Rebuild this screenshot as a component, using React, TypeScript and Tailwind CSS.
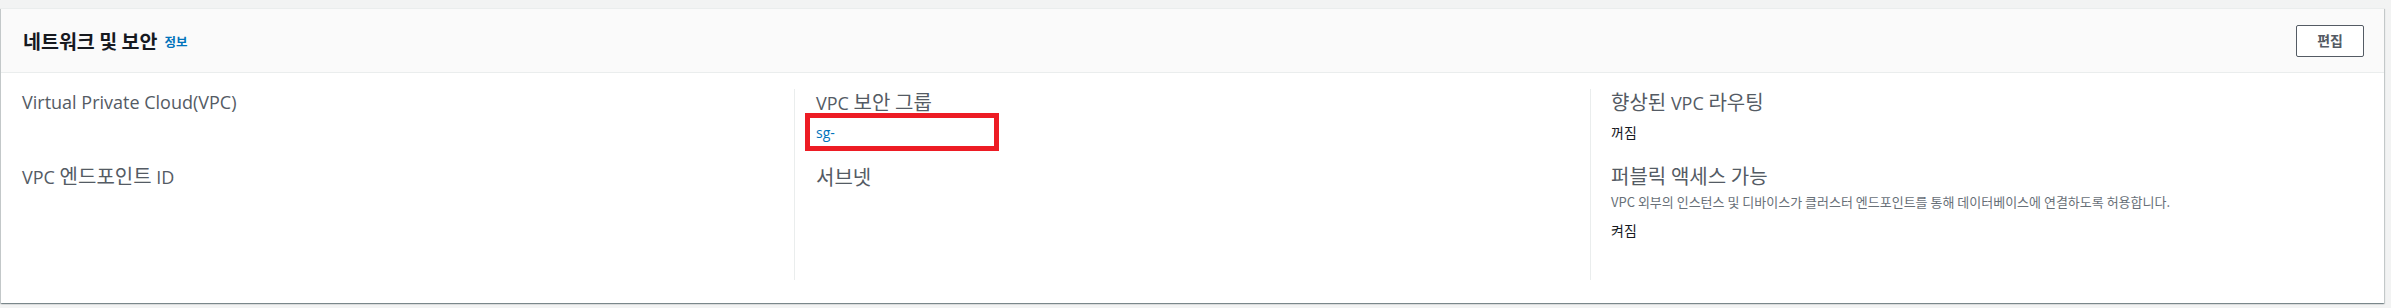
const label =
  "text-[18px] leading-[26px] text-[#545b64] font-['Open_Sans','Noto_Sans_CJK_KR',sans-serif]";
const value = "text-[14px] leading-[22px] text-[#16191f] font-['Noto_Sans_CJK_KR','Open_Sans',sans-serif]";

// Korean runs render a bit larger than the Latin ones in the labels
function Mixed({ text }: { text: string }) {
  return (
    <>
      {text.split(/([\uAC00-\uD7A3]+)/).map((part, i) =>
        /[\uAC00-\uD7A3]/.test(part) ? (
          <span key={i} className="text-[20px] leading-[26px] font-['Noto_Sans_CJK_KR',sans-serif]">
            {part}
          </span>
        ) : (
          <span key={i}>{part}</span>
        )
      )}
    </>
  );
}

function Item({
  title,
  desc,
  children,
}: {
  title: string;
  desc?: string;
  children?: React.ReactNode;
}) {
  return (
    <div className="mb-[20px]">
      <div className={`${label} h-[26px]`}>
        <Mixed text={title} />
      </div>
      {desc && (
        <div className="mt-[4px] text-[13px] leading-[18px] text-[#687078] font-['Noto_Sans_CJK_KR','Open_Sans',sans-serif]">
          {desc}
        </div>
      )}
      <div className={`${desc ? "mt-[8px]" : "mt-[6px]"} min-h-[22px] ${value}`}>{children}</div>
    </div>
  );
}

export default function App() {
  return (
    <div className="w-[2391px] h-[308px] bg-[#f2f3f3] pl-[1px] pr-[7px] pt-[8px]">
      <div className="bg-white border-t border-[#eaeded] shadow-[0_1px_1px_0_rgba(0,28,36,0.3),1px_1px_1px_0_rgba(0,28,36,0.15),-1px_1px_1px_0_rgba(0,28,36,0.15)]">
        <div className="h-[64px] bg-[#fafafa] border-b border-[#eaeded] flex items-center justify-between px-[20px]">
          <div className="flex items-center font-['Noto_Sans_CJK_KR',sans-serif]">
            <h2 className="text-[19.5px] font-bold text-[#16191f] leading-[26px] pl-[2px]">네트워크 및 보안</h2>
            <span className="ml-[7px] text-[12.5px] font-bold text-[#0073bb] leading-[16px] mt-[2px]">정보</span>
          </div>
          <button className="h-[32px] px-[20px] border border-[#545b64] rounded-[2px] bg-white text-[14px] font-bold text-[#545b64] font-['Noto_Sans_CJK_KR',sans-serif]">
            편집
          </button>
        </div>
        <div className="flex px-[20px] pt-[16px] pb-[23px]">
          <div className="w-[773px] pb-[19px] pl-[1px]">
            <Item title="Virtual Private Cloud(VPC)" />
            <Item title="VPC 엔드포인트 ID" />
          </div>
          <div className="w-[796px] border-l border-[#eaeded] pl-[21px] pb-[19px]">
            <Item title="VPC 보안 그룹">
              <div className="relative">
                <span className="text-[14px] text-[#0073bb] font-['Open_Sans',sans-serif]">sg-</span>
                <div className="absolute left-[-11px] top-[-8px] w-[194px] h-[38px] border-[5px] border-[#ed1c24]" />
              </div>
            </Item>
            <Item title="서브넷" />
          </div>
          <div className="flex-1 border-l border-[#eaeded] pl-[20px] pb-[19px]">
            <Item title="향상된 VPC 라우팅">꺼짐</Item>
            <Item
              title="퍼블릭 액세스 가능"
              desc="VPC 외부의 인스턴스 및 디바이스가 클러스터 엔드포인트를 통해 데이터베이스에 연결하도록 허용합니다."
            >
              켜짐
            </Item>
          </div>
        </div>
      </div>
    </div>
  );
}
